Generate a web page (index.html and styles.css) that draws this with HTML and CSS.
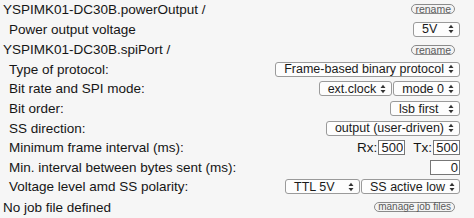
FILE: index.html
```html
<!DOCTYPE html>
<html lang="en">
<head>
  <meta charset="UTF-8">
  <title>YSPIMK01 configuration</title>
  <link rel="stylesheet" href="styles.css">
</head>
<body>

  <table class="config">
    <tr class="r1">
      <td class="fn">YSPIMK01-DC30B.powerOutput /</td>
      <td class="ctl"><span class="pill">rename</span></td>
    </tr>
    <tr class="r2">
      <td class="attr">Power output voltage</td>
      <td class="ctl"><div class="sel w-5v"><span>5V</span><svg viewBox="0 0 6 10"><path d="M0.5 4 L3 0.8 L5.5 4 Z M0.5 6 L3 9.2 L5.5 6 Z"/></svg></div></td>
    </tr>
    <tr class="r3">
      <td class="fn">YSPIMK01-DC30B.spiPort /</td>
      <td class="ctl"><span class="pill">rename</span></td>
    </tr>
    <tr>
      <td class="attr">Type of protocol:</td>
      <td class="ctl"><div class="sel"><span>Frame-based binary protocol</span><svg viewBox="0 0 6 10"><path d="M0.5 4 L3 0.8 L5.5 4 Z M0.5 6 L3 9.2 L5.5 6 Z"/></svg></div></td>
    </tr>
    <tr>
      <td class="attr">Bit rate and SPI mode:</td>
      <td class="ctl">
        <div class="sel"><span>ext.clock</span><svg viewBox="0 0 6 10"><path d="M0.5 4 L3 0.8 L5.5 4 Z M0.5 6 L3 9.2 L5.5 6 Z"/></svg></div><div class="sel"><span>mode 0</span><svg viewBox="0 0 6 10"><path d="M0.5 4 L3 0.8 L5.5 4 Z M0.5 6 L3 9.2 L5.5 6 Z"/></svg></div>
      </td>
    </tr>
    <tr>
      <td class="attr">Bit order:</td>
      <td class="ctl"><div class="sel w-lsb"><span>lsb first</span><svg viewBox="0 0 6 10"><path d="M0.5 4 L3 0.8 L5.5 4 Z M0.5 6 L3 9.2 L5.5 6 Z"/></svg></div></td>
    </tr>
    <tr>
      <td class="attr">SS direction:</td>
      <td class="ctl"><div class="sel"><span>output (user-driven)</span><svg viewBox="0 0 6 10"><path d="M0.5 4 L3 0.8 L5.5 4 Z M0.5 6 L3 9.2 L5.5 6 Z"/></svg></div></td>
    </tr>
    <tr>
      <td class="attr">Minimum frame interval (ms):</td>
      <td class="ctl">
        <span class="lbl">Rx:</span><input class="num" type="text" value="500">
        <span class="lbl tx">Tx:</span><input class="num" type="text" value="500">
      </td>
    </tr>
    <tr>
      <td class="attr">Min. interval between bytes sent (ms):</td>
      <td class="ctl"><input class="num w-zero" type="text" value="0"></td>
    </tr>
    <tr>
      <td class="attr">Voltage level amd SS polarity:</td>
      <td class="ctl">
        <div class="sel w-ttl"><span>TTL 5V</span><svg viewBox="0 0 6 10"><path d="M0.5 4 L3 0.8 L5.5 4 Z M0.5 6 L3 9.2 L5.5 6 Z"/></svg></div><div class="sel w-ss"><span>SS active low</span><svg viewBox="0 0 6 10"><path d="M0.5 4 L3 0.8 L5.5 4 Z M0.5 6 L3 9.2 L5.5 6 Z"/></svg></div>
      </td>
    </tr>
    <tr class="last">
      <td class="fn">No job file defined</td>
      <td class="ctl"><span class="pill jobs">manage job files</span></td>
    </tr>
  </table>

</body>
</html>
```

FILE: styles.css
```css
body {
  margin: 0;
  padding: 0 0 0 3px;
  background-color: #f6f6f6;
  font-family: 'Liberation Sans', Arial, sans-serif;
  font-size: 13.5px;
  color: #151515;
}

.config {
  border-collapse: collapse;
  width: 457px;
}

.config td {
  padding: 0;
  height: 19.6px;
  white-space: nowrap;
}

.config .r1 td {
  height: 18px;
}

.config .r2 td {
  height: 22px;
}

.config .last td {
  height: 21px;
}

.attr {
  padding-left: 6px !important;
}

.ctl {
  text-align: right;
  font-size: 0;
}

.pill {
  display: inline-block;
  font-size: 10.5px;
  line-height: 8px;
  height: 8px;
  padding: 0 3px;
  margin-right: 5px;
  border: 1px solid #8a8a8a;
  border-radius: 5px;
  color: #5a5a5a;
  background: #f4f4f4;
  vertical-align: middle;
}

.pill.jobs {
  font-size: 10px;
}

.sel {
  display: inline-flex;
  align-items: center;
  justify-content: space-between;
  box-sizing: border-box;
  height: 15px;
  padding: 0 5px 0 8px;
  margin-left: 1px;
  border: 1px solid #9a9a9a;
  border-radius: 3px;
  background: #fdfdfd;
  font-size: 12.5px;
  color: #1a1a1a;
  vertical-align: middle;
}

.sel span {
  flex: none;
}

.sel svg {
  flex: none;
  width: 6px;
  height: 10px;
  margin-left: 4px;
  fill: #333;
}

.w-5v { width: 47px; }
.w-lsb { width: 70px; }
.w-ttl { width: 75px; }
.w-ss { width: 99px; }

.lbl {
  font-size: 13.5px;
  vertical-align: middle;
  margin-right: 1px;
}

.lbl.tx {
  margin-left: 8px;
}

.num {
  box-sizing: border-box;
  width: 27px;
  height: 15px;
  padding: 0 1px;
  border: 1px solid #777;
  border-radius: 0;
  background: #fff;
  font-family: 'Liberation Sans', Arial, sans-serif;
  font-size: 13px;
  text-align: right;
  color: #1a1a1a;
  vertical-align: middle;
}

.num.w-zero {
  width: 30px;
}
```
